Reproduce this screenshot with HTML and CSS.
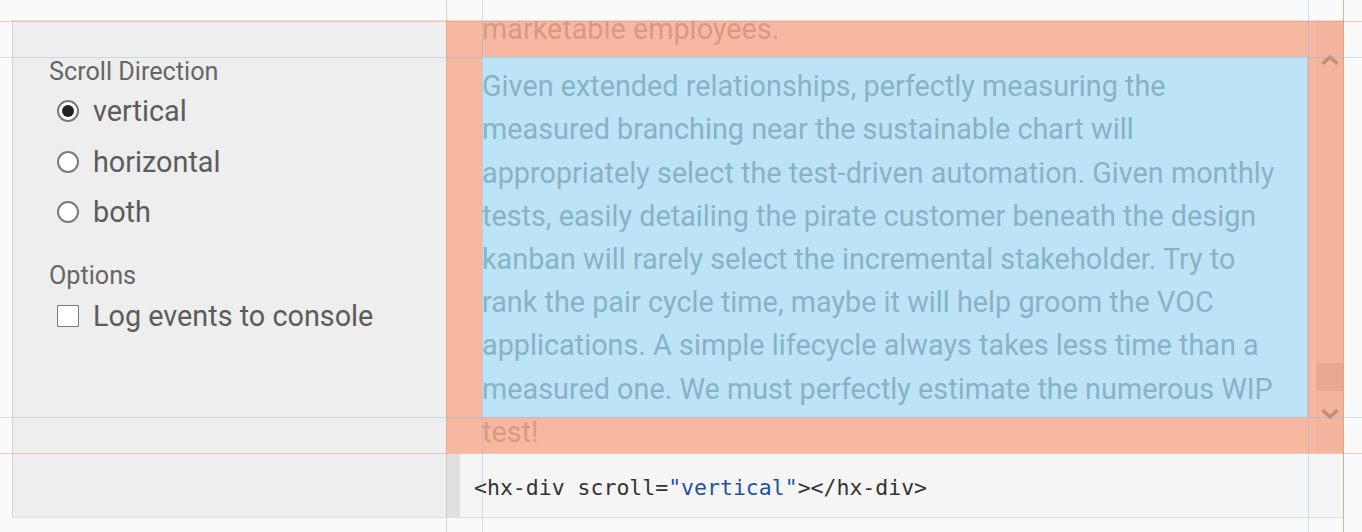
FILE: index.html
```html
<!DOCTYPE html>
<html lang="en">
<head>
<meta charset="utf-8">
<title>hx-div scroll demo</title>
<link rel="stylesheet" href="styles.css">
</head>
<body>
<div class="demo">
  <section class="controls">
    <p class="group-label">Scroll Direction</p>
    <label class="choice"><input class="radio" type="radio" name="dir" checked><span>vertical</span></label>
    <label class="choice"><input class="radio" type="radio" name="dir"><span>horizontal</span></label>
    <label class="choice"><input class="radio" type="radio" name="dir"><span>both</span></label>
    <p class="group-label options">Options</p>
    <label class="choice"><input class="checkbox" type="checkbox"><span>Log events to console</span></label>
  </section>
  <section class="preview">
    <div class="hx-div">
      <div class="viewport">
        <p class="para first">marketable employees.</p>
        <p class="para">Given extended relationships, perfectly measuring the measured branching near the sustainable chart will appropriately select the test-driven automation. Given monthly tests, easily detailing the pirate customer beneath the design kanban will rarely select the incremental stakeholder. Try to rank the pair cycle time, maybe it will help groom the VOC applications. A simple lifecycle always takes less time than a measured one. We must perfectly estimate the numerous WIP test!</p>
        <p class="para">Our sprints are extreme, but a careful retrospective will always deliver the backlog.</p>
      </div>
      <div class="scrollbar">
        <div class="sb-btn"><svg width="20" height="12" viewBox="0 0 20 12"><polyline points="2.5,10 10,3 17.5,10" fill="none" stroke="#3a3a3a" stroke-width="3.6"/></svg></div>
        <div class="sb-track"><div class="sb-thumb"></div></div>
        <div class="sb-btn"><svg width="20" height="12" viewBox="0 0 20 12"><polyline points="2.5,2 10,9 17.5,2" fill="none" stroke="#3a3a3a" stroke-width="3.6"/></svg></div>
      </div>
      <div class="highlight"></div>
    </div>
    <div class="code"><code>&lt;hx-div scroll=<span class="str">"vertical"</span>&gt;&lt;/hx-div&gt;</code></div>
  </section>
</div>
<div class="guides">
  <span class="guide h orange g-top"></span>
  <span class="guide h blue g-ctop"></span>
  <span class="guide h blue g-cbottom"></span>
  <span class="guide h orange g-bottom"></span>
  <span class="guide v orange g-left"></span>
  <span class="guide v blue g-cleft"></span>
  <span class="guide v blue g-cright"></span>
  <span class="guide v tan g-right"></span>
</div>
</body>
</html>
```

FILE: styles.css
```css
html, body {
  margin: 0;
  padding: 0;
}

body {
  background: #fafafa;
  font-family: Roboto, "Noto Sans", sans-serif;
  overflow: hidden;
}

.demo {
  display: flex;
  margin: 20px 18px 0 12px;
  height: 498px;
  box-sizing: border-box;
  border: 1px solid #e0e0e0;
  border-left-color: #d6d6d6;
}

/* left control panel */
.controls {
  flex: none;
  width: 433px;
  box-sizing: border-box;
  padding: 35.5px 36px;
  background: #eeeeee;
}

.group-label {
  margin: 0;
  font-size: 25.2px;
  line-height: 29.5px;
  color: #666666;
}

.group-label.options {
  margin-top: 23.4px;
}

.choice {
  display: flex;
  align-items: center;
  gap: 14px;
  height: 50.4px;
  padding-left: 8px;
  font-size: 28.8px;
  color: #5c5c5c;
}

.choice:last-child {
  margin-top: 1px;
}

.radio,
.checkbox {
  appearance: none;
  -webkit-appearance: none;
  flex: none;
  margin: 0;
  width: 22px;
  height: 22px;
  box-sizing: border-box;
  background: #ffffff;
}

.radio {
  display: grid;
  place-content: center;
  border: 2px solid #7a7a7a;
  border-radius: 50%;
}

.radio:checked::before {
  content: "";
  display: block;
  width: 12px;
  height: 12px;
  border-radius: 50%;
  background: #222222;
}

.checkbox {
  border: 1.5px solid #7a7a7a;
  border-radius: 1px;
}

/* right preview */
.preview {
  flex: 1;
  min-width: 0;
  display: flex;
  flex-direction: column;
}

.hx-div {
  position: relative;
  display: flex;
  height: 432px;
  background: #ffffff;
}

.viewport {
  flex: 1;
  min-width: 0;
  overflow: hidden;
  padding: 36px;
}

.para {
  margin: 0 0 14.4px;
  font-size: 28.8px;
  line-height: 43.2px;
  color: #757575;
}

.para.first {
  margin-top: -49.5px;
}

.scrollbar {
  flex: none;
  width: 27px;
  box-sizing: border-box;
  padding: 27px 0;
  display: flex;
  flex-direction: column;
  background: #f1f1f1;
}

.sb-btn {
  height: 24px;
  display: flex;
  align-items: center;
  justify-content: center;
}

.sb-track {
  flex: 1;
  display: flex;
  flex-direction: column;
  justify-content: flex-end;
  padding-bottom: 11px;
}

.sb-thumb {
  height: 28px;
  background: #bcbcbc;
}

/* devtools element highlight over the hx-div */
.highlight {
  position: absolute;
  inset: 0;
  box-sizing: border-box;
  border: 36px solid rgba(245, 163, 135, 0.775);
  background: rgba(152, 211, 241, 0.638);
  background-clip: padding-box;
  pointer-events: none;
}

.code {
  height: 64px;
  box-sizing: border-box;
  padding: 20.5px 14px 15.5px;
  border-left: 14px solid #e0e0e0;
  background: #f5f5f5;
  font-family: "DejaVu Sans Mono", "Liberation Mono", monospace;
  font-size: 21.5px;
  line-height: 28px;
  color: #333333;
  white-space: pre;
}

.code code {
  font: inherit;
}

.code .str {
  color: #2452a0;
}

/* highlight guide lines */
.guides {
  position: fixed;
  inset: 0;
  pointer-events: none;
}

.guide {
  position: absolute;
}

.guide.h {
  left: 0;
  right: 0;
  height: 1px;
}

.guide.v {
  top: 0;
  bottom: 0;
  width: 1px;
}

.guide.orange { background: rgba(240, 140, 110, 0.45); }
.guide.blue { background: rgba(120, 190, 230, 0.4); }
.guide.tan { background: rgba(200, 150, 80, 0.65); }

.g-top { top: 21px; }
.g-ctop { top: 57px; }
.g-cbottom { top: 417px; }
.g-bottom { top: 453px; }
.g-left { left: 446px; }
.g-cleft { left: 482px; }
.g-cright { left: 1308px; }
.g-right { left: 1343px; }
```
